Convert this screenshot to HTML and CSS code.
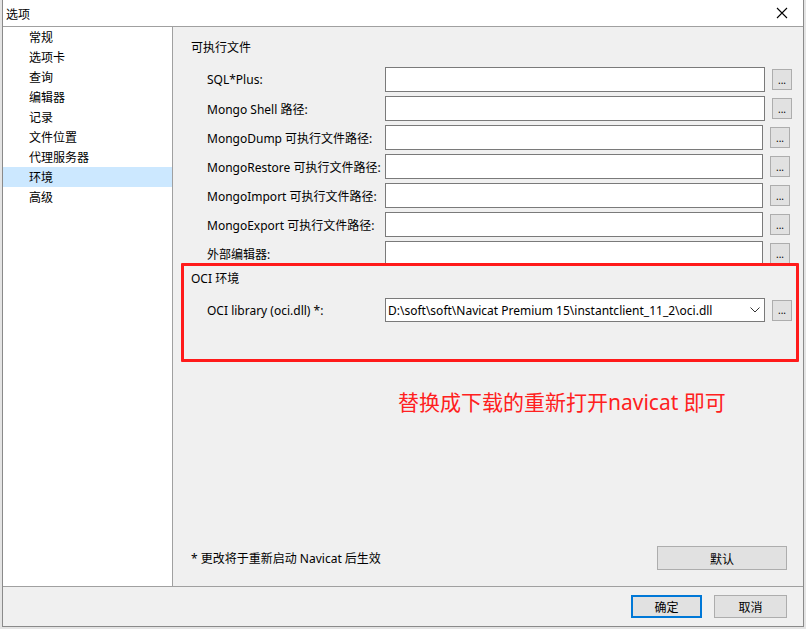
FILE: index.html
```html
<!DOCTYPE html>
<html lang="zh-CN">
<head>
    <meta charset="UTF-8">
    <meta name="viewport" content="width=device-width, initial-scale=1.0">
    <title>选项</title>
    <link rel="stylesheet" href="styles.css">
</head>
<body>
    <div class="dialog">
        <div class="titlebar">
            <span class="title">选项</span>
            <svg class="close" width="12" height="12" viewBox="0 0 12 12">
                <path d="M1 1 L11 11 M11 1 L1 11" stroke="#000" stroke-width="1.1" fill="none"/>
            </svg>
        </div>
        <div class="main">
            <ul class="nav">
                <li>常规</li>
                <li>选项卡</li>
                <li>查询</li>
                <li>编辑器</li>
                <li>记录</li>
                <li>文件位置</li>
                <li>代理服务器</li>
                <li class="active">环境</li>
                <li>高级</li>
            </ul>
            <div class="pane">
                <div class="group-title">可执行文件</div>
                <div class="rows">
                    <div class="row">
                        <label>SQL*Plus:</label>
                        <div class="field"></div>
                        <button class="browse">...</button>
                    </div>
                    <div class="row">
                        <label>Mongo Shell 路径:</label>
                        <div class="field"></div>
                        <button class="browse">...</button>
                    </div>
                    <div class="row narrow">
                        <label>MongoDump 可执行文件路径:</label>
                        <div class="field"></div>
                        <button class="browse">...</button>
                    </div>
                    <div class="row narrow">
                        <label>MongoRestore 可执行文件路径:</label>
                        <div class="field"></div>
                        <button class="browse">...</button>
                    </div>
                    <div class="row narrow">
                        <label>MongoImport 可执行文件路径:</label>
                        <div class="field"></div>
                        <button class="browse">...</button>
                    </div>
                    <div class="row narrow">
                        <label>MongoExport 可执行文件路径:</label>
                        <div class="field"></div>
                        <button class="browse">...</button>
                    </div>
                    <div class="row narrow">
                        <label>外部编辑器:</label>
                        <div class="field"></div>
                        <button class="browse">...</button>
                    </div>
                </div>

                <div class="group-title oci-title">OCI 环境</div>
                <div class="row combo-row">
                    <label>OCI library (oci.dll) *:</label>
                    <div class="field combo">
                        <span>D:\soft\soft\Navicat Premium 15\instantclient_11_2\oci.dll</span>
                        <svg width="10" height="6" viewBox="0 0 10 6">
                            <path d="M0.5 0.5 L5 5 L9.5 0.5" stroke="#333" stroke-width="1" fill="none"/>
                        </svg>
                    </div>
                    <button class="browse">...</button>
                </div>

                <div class="spacer"></div>
                <div class="note-row">
                    <span>* 更改将于重新启动 Navicat 后生效</span>
                    <button class="btn default-btn">默认</button>
                </div>

                <!-- annotation drawn over the screenshot -->
                <div class="mark-box"></div>
                <div class="mark-text">替换成下载的重新打开navicat 即可</div>
            </div>
        </div>
        <div class="footer">
            <button class="btn primary">确定</button>
            <button class="btn">取消</button>
        </div>
    </div>
</body>
</html>
```

FILE: styles.css
```css
body {
    margin: 0;
    padding: 0;
    background-color: #e4e4e4;
    font-family: "Noto Sans", "Noto Sans CJK SC", sans-serif;
    font-size: 12px;
    color: #000;
}
.dialog {
    margin-left: 2px;
    width: 800px;
    height: 626px;
    border: 1px solid #8a8a8a;
    border-top: none;
    background-color: #f0f0f0;
    display: flex;
    flex-direction: column;
}
.titlebar {
    height: 26px;
    background-color: white;
    border-bottom: 1px solid #a0a0a0;
    display: flex;
    align-items: center;
    justify-content: space-between;
    padding: 0 15px 0 3px;
}
.title {
    font-family: "Noto Sans CJK SC", sans-serif;
}
.close {
    display: block;
}
.main {
    flex: 1;
    display: flex;
    min-height: 0;
}
.nav {
    list-style: none;
    margin: 0;
    padding: 0;
    width: 169px;
    flex-shrink: 0;
    background-color: white;
    border-right: 1px solid #a0a0a0;
    font-family: "Noto Sans CJK SC", sans-serif;
}
.nav li {
    height: 20px;
    line-height: 20px;
    padding-left: 26px;
}
.nav li.active {
    background-color: #cce8ff;
}
.pane {
    flex: 1;
    min-width: 0;
    position: relative;
    display: flex;
    flex-direction: column;
    padding: 11px 16px 16px 18px;
}
.group-title {
    height: 20px;
    line-height: 20px;
}
.rows {
    display: flex;
    flex-direction: column;
    gap: 4px;
    margin-top: 9px;
}
.row {
    display: flex;
    align-items: center;
    height: 25px;
    padding-left: 16px;
}
.row label {
    width: 178px;
    flex-shrink: 0;
    white-space: nowrap;
}
.field {
    width: 378px;
    height: 23px;
    flex-shrink: 0;
    background-color: white;
    border: 1px solid #7a7a7a;
}
.row.narrow .field {
    width: 376px;
}
.browse {
    margin-left: 7px;
    width: 20px;
    height: 21px;
    flex-shrink: 0;
    padding: 0;
    background-color: #e1e1e1;
    border: 1px solid #adadad;
    font-family: "Noto Sans", sans-serif;
    font-size: 10px;
    line-height: 14px;
    color: #000;
}
.oci-title {
    margin-top: 3px;
}
.combo-row {
    height: 26px;
    margin-top: 8px;
}
.combo {
    height: 24px;
    display: flex;
    align-items: center;
    justify-content: space-between;
    padding: 0 4px 0 2px;
    box-sizing: border-box;
    width: 380px;
}
.combo span {
    white-space: nowrap;
}
.spacer {
    flex: 1;
}
.note-row {
    display: flex;
    align-items: center;
    justify-content: space-between;
}
.btn {
    width: 73px;
    height: 23px;
    padding: 0;
    background-color: #e1e1e1;
    border: 1px solid #adadad;
    font-family: "Noto Sans CJK SC", sans-serif;
    font-size: 12px;
    color: #000;
}
.default-btn {
    width: 130px;
    height: 24px;
}
.btn.primary {
    width: 71px;
    border: 2px solid #0078d7;
}
.footer {
    height: 40px;
    border-top: 1px solid #a0a0a0;
    display: flex;
    justify-content: flex-end;
    align-items: flex-start;
    gap: 12px;
    padding: 8px 16px 0 0;
    box-sizing: border-box;
}
.mark-box {
    position: absolute;
    left: 8px;
    top: 236px;
    width: 612px;
    height: 93px;
    border: 3px solid #ff1a1a;
    border-radius: 1px;
}
.mark-text {
    position: absolute;
    left: 225px;
    top: 362px;
    color: #ff2020;
    font-family: "Noto Sans", "Noto Sans CJK SC", sans-serif;
    font-size: 21px;
    line-height: 26px;
    white-space: nowrap;
}
```
